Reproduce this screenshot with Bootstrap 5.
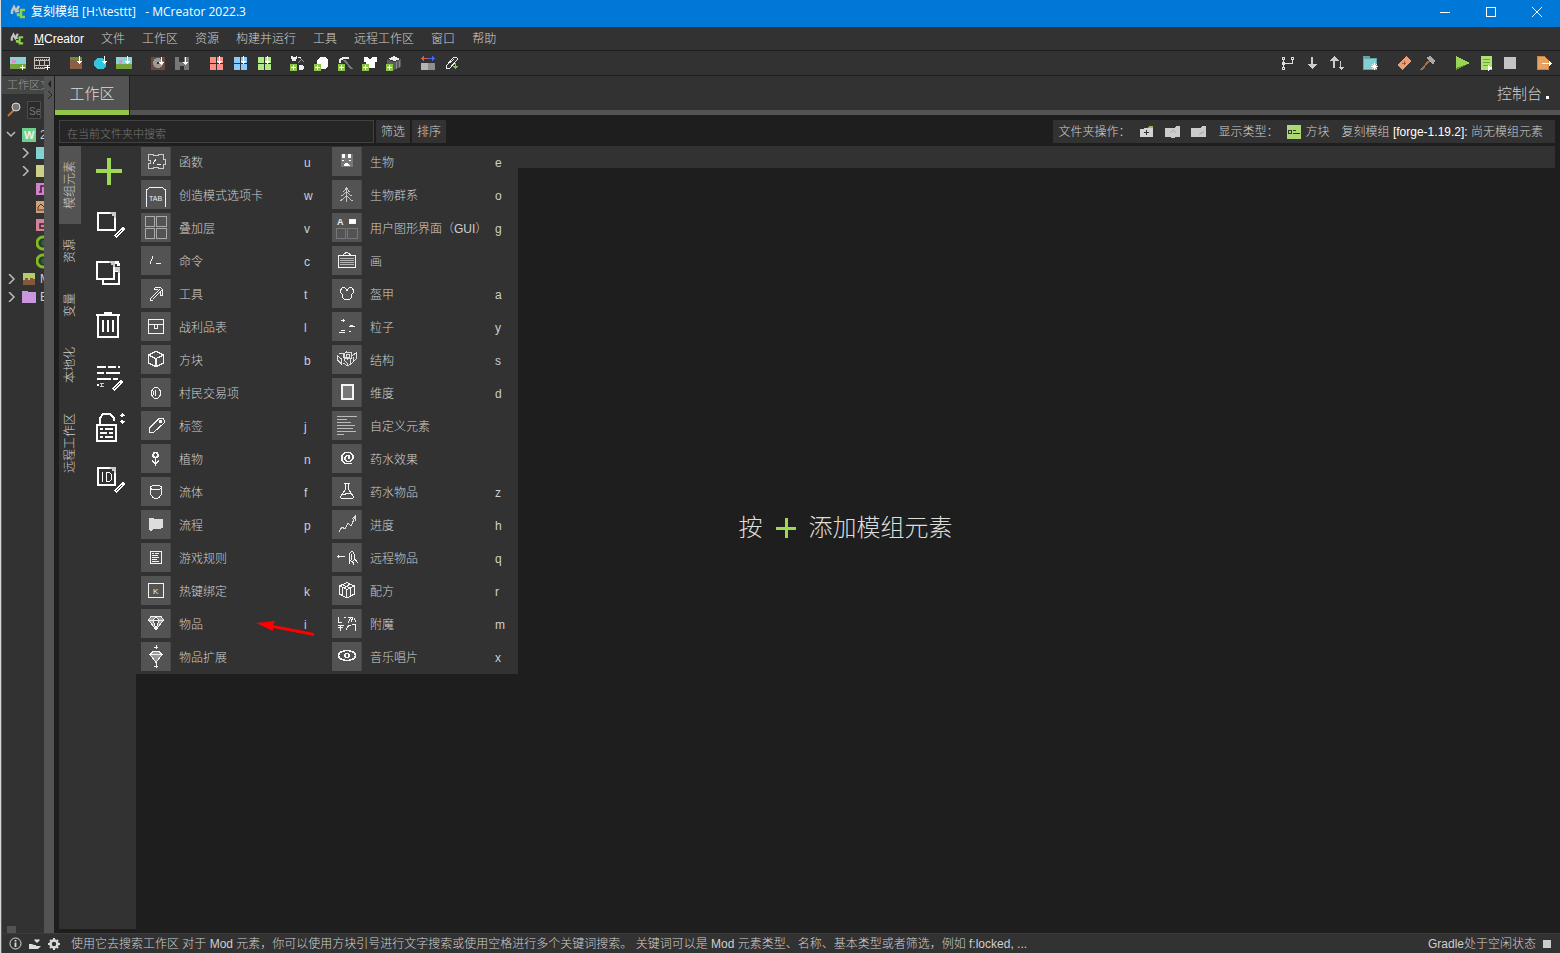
<!DOCTYPE html>
<html lang="zh-CN" data-bs-theme="dark">
<head>
<meta charset="utf-8">
<meta name="viewport" content="width=device-width, initial-scale=1">
<title>复刻模组 [H:\testtt] - MCreator 2022.3</title>
<link href="https://cdn.jsdelivr.net/npm/bootstrap@5.3.0/dist/css/bootstrap.min.css" rel="stylesheet">
<script src="https://cdn.jsdelivr.net/npm/bootstrap@5.3.0/dist/js/bootstrap.bundle.min.js" defer></script>
<style>
:root{--panel:#323232;--mid:#535353;--deep:#1e1e1e;--lime:#93c54b;--ink:#cfcfcf}
body{font:12px/18px "Liberation Sans","Noto Sans CJK SC",sans-serif;font-weight:300;color:var(--ink);background:var(--panel);border-left:1px solid #d5d9dc}
button,input{font:inherit;color:inherit}
button{background:none;border:0;padding:0}
a{color:inherit;text-decoration:none}
svg{display:block;flex:none;fill:none;stroke:none}
.window-frame{min-height:100vh;border-left:1px solid #0078d7}
.title-bar{height:27px;background:#0078d7;color:#fff;font-family:"Open Sans","Noto Sans CJK SC",sans-serif;font-weight:400;padding:0 0 4px 8px}
.title-text{white-space:pre;padding-left:5px}
.title-bar button{width:46px;height:22px}
.menu-row{height:24px;gap:17px;padding-left:8px;border-bottom:1px solid var(--deep)}
.menu-row .brand-link{gap:10px;color:#fff}
.tool-row{height:25px;padding:0 4px;border-bottom:1px solid var(--deep)}
.tool-set{gap:10px}
.tool-set button{width:24px;height:24px;display:grid;place-items:center}
.tree-pane{width:42px;overflow:hidden}
.tree-head{height:18px;background:#464646;color:#999;font-size:11px;padding-left:5px;white-space:nowrap;overflow:hidden}
.tree-find{height:32px;padding-left:5px;gap:6px}
.tree-find input{width:14px;height:18px;border:1px solid #4b4b4b;background:#2b2b2b;font-size:10px;padding:4px 0 0 1px}
.tree-find input::placeholder,.find-box::placeholder{color:#777;opacity:1}
.tree-list li{height:18px;gap:4px;padding-left:4px;white-space:nowrap}
.tree-list .lv2{padding-left:18px}
.tree-list .leaf{padding-left:34px}
.tree-thumb{width:9px;height:7px;margin-left:5px;background:var(--mid)}
.split-bar{width:10px;background:var(--mid);padding-top:3px;gap:1px}
.work-zone{background:var(--deep);min-width:0}
.tab-row{height:39px;padding-left:1px;gap:1px}
.tab-row .tab-on{width:74px;background:var(--mid);border-bottom:5px solid var(--lime);font-size:15px;color:#ddd;padding-top:2px}
.tab-fill{background:var(--panel);border-bottom:5px solid var(--mid);padding:2px 11px 0 0;font-size:15px}
.console-dot{width:3px;height:3px;background:#fff;margin:7px 0 0 4px}
.work-body{padding:5px 5px 4px 5px;gap:3px}
.filter-row{height:23px;gap:2px}
.find-box{width:315px;border:1px solid #414141;background:#262626;font-size:11px;padding:4px 7px 0}
.filter-row>button{width:34px;background:var(--panel)}
.info-strip{background:var(--panel);padding:0 12px 0 6px;white-space:nowrap}
.folder-tools{gap:11px;margin:0 13px 0 8px}
.view-kind{gap:5px;margin:0 12px 0 8px}
.side-tabs{width:22px}
.side-tabs button{writing-mode:vertical-rl;text-orientation:sideways;transform:rotate(180deg);padding:15px 0;line-height:22px}
.side-tabs .on{background:var(--mid)}
.side-pane{background:var(--panel);width:77px}
.side-tools{padding:10px 0 0 11px;gap:19px}
.list-head{height:22px;background:var(--panel)}
.empty-note{font-size:24px;line-height:36px;color:#ddd;gap:13px;padding-bottom:41px}
.element-menu{position:absolute;left:0;top:0;display:grid;grid-template:repeat(16,33px)/repeat(2,191px);grid-auto-flow:column;background:var(--panel)}
.element-menu button{display:grid;grid-template-columns:30px 117px auto;column-gap:8px;align-items:center;padding:0 0 2px 5px;text-align:left}
.element-menu span{padding-top:2px}
.element-menu svg{width:30px;height:29px;background:var(--mid);border:solid #484848;border-width:0 1px 0 0;stroke:#f4f4f4;shape-rendering:crispEdges}
.element-menu text,.solid-text{stroke:none;fill:#eee;font-family:"Liberation Sans",sans-serif}
.red-mark{position:absolute;left:120px;top:474px}
.status-row{height:20px;border-top:1px solid #3c3c3c;padding:0 9px 0 7px;gap:7px;white-space:nowrap}
.crisp{shape-rendering:crispEdges}
</style>
</head>
<body>
<div class="window-frame d-flex flex-column">
<header>
<div class="title-bar d-flex align-items-center">
<svg width="16" height="16" viewBox="0 0 16 16"><path d="M2 10V7l2-4 2 4 3-5M7 4l1 4" stroke="#c4c4c4" stroke-width="2.500"/><path d="M15 6h-4v7h4M8 9v2h3" stroke="#8fd14a" stroke-width="2.500"/></svg>
<span class="title-text flex-grow-1">复刻模组 [H:\testtt]   - MCreator 2022.3</span>
<button aria-label="最小化"><svg class="m-auto crisp" width="12" height="12"><path d="M1 6.500h10" stroke="#fff"/></svg></button>
<button aria-label="最大化"><svg class="m-auto crisp" width="12" height="12"><path d="M1.500 1.500h9v9h-9z" stroke="#fff"/></svg></button>
<button aria-label="关闭"><svg class="m-auto" width="12" height="12"><path d="M1 1l10 10M11 1L1 11" stroke="#fff"/></svg></button>
</div>
<nav class="menu-row d-flex align-items-center">
<a href="#" class="brand-link d-flex align-items-center"><svg width="14" height="14" viewBox="0 0 16 16"><path d="M2 10V7l2-4 2 4 3-5M7 4l1 4" stroke="#c4c4c4" stroke-width="2.500"/><path d="M15 6h-4v7h4M8 9v2h3" stroke="#8fd14a" stroke-width="2.500"/></svg><span><u>M</u>Creator</span></a>
<a href="#">文件</a><a href="#">工作区</a><a href="#">资源</a><a href="#">构建并运行</a><a href="#">工具</a><a href="#">远程工作区</a><a href="#">窗口</a><a href="#">帮助</a>
</nav>
<div class="tool-row d-flex justify-content-between crisp">
<div class="tool-set d-flex">
<div class="d-flex">
<button aria-label="新建纹理"><svg width="16" height="16"><path fill="#8ad2d6" d="M0 2h16v8H0z"/><path fill="#74a33c" d="M0 9h16v5H0z"/><path fill="#e68bd0" d="M2 5h4v3H2z"/><path stroke="#fff" d="M12.500 10v5M10 12.500h5"/></svg></button>
<button aria-label="动画纹理"><svg width="16" height="16"><path stroke="#c9bdb8" d="M0 2.500h16M0 13.500h11M.5 2v12M5.500 5v6M10.500 5v6M15.500 2v8M0 5.500h16M0 10.500h16" /><path stroke="#c9bdb8" stroke-dasharray="1 1" d="M0 4h16M0 12h11"/><path stroke="#fff" d="M13.500 10v5M11 12.500h5"/></svg></button>
</div>
<div class="d-flex">
<button aria-label="导入方块纹理"><svg width="16" height="16"><path fill="#8b5f43" d="M2 2h12v12H2z"/><path fill="#668f37" d="M2 2h12v3H2z"/><path stroke="#fff" d="M11.500 1v8M9 6.500h5M10 7.500h3"/></svg></button>
<button aria-label="导入物品纹理"><svg width="16" height="16"><path fill="#30c6dc" d="M5 3h6l3 4v4l-3 3H5l-3-3V6z"/><path stroke="#fff" d="M12.500 1v8M10 6.500h5M11 7.500h3"/></svg></button>
<button aria-label="导入其他纹理"><svg width="16" height="16"><path fill="#8ad2d6" d="M0 2h16v8H0z"/><path fill="#74a33c" d="M0 9h16v5H0z"/><path fill="#e68bd0" d="M3 5h3v4H3z"/><path stroke="#fff" d="M11.500 1v8M9 6.500h5M10 7.500h3"/></svg></button>
</div>
<div class="d-flex">
<button aria-label="导入声音"><svg width="16" height="16"><path fill="#6d4a3c" d="M1 2h14v13H1z"/><circle cx="8" cy="8" r="5" fill="#999"/><circle cx="8" cy="8" r="1.500" fill="#333"/><path stroke="#fff" d="M11.500 2v8M9 7.500h5M10 8.500h3"/></svg></button>
<button aria-label="导入结构"><svg width="16" height="16"><path fill="#777" d="M1 2h4v5h5V2h5v13h-5v-4H6v4H1z"/><path stroke="#fff" d="M11.500 2v8M9 7.500h5M10 8.500h3"/></svg></button>
</div>
<div class="d-flex">
<button aria-label="导入 Java 模型"><svg width="16" height="16"><path fill="#ff9088" d="M2 2h6v6H2zM9 2h6v6H9zM2 9h6v6H2zM9 9h6v6H9z"/><path stroke="#fff" d="M11.500 1v8M9 6.500h5M10 7.500h3"/></svg></button>
<button aria-label="导入 JSON 模型"><svg width="16" height="16"><path fill="#88ccff" d="M2 2h6v6H2zM9 2h6v6H9zM2 9h6v6H2zM9 9h6v6H9z"/><path stroke="#fff" d="M11.500 1v8M9 6.500h5M10 7.500h3"/></svg></button>
<button aria-label="导入 OBJ 模型"><svg width="16" height="16"><path fill="#b0e986" d="M2 2h6v6H2zM9 2h6v6H9zM2 9h6v6H2zM9 9h6v6H9z"/><path stroke="#fff" d="M11.500 1v8M9 6.500h5M10 7.500h3"/></svg></button>
</div>
<div class="d-flex">
<button aria-label="材料包"><svg width="16" height="16"><path fill="#eee" d="M1 1l3 1 3-1v3H6v2H2V4H1zM9 10h4v1h1v3h-1v1H9zM8 2h3v1H8z"/><path stroke="#999" d="M10 3l4 4M8 8l3-3"/><path fill="#8bc34a" d="M0 9h7v7H0z"/><path stroke="#fff" d="M3.500 10v5M1 12.500h5"/></svg></button>
<button aria-label="矿石包"><svg width="16" height="16"><path fill="#fff" d="M6 2h5l3 3v6l-3 3H6L3 11V6z"/><path fill="#8bc34a" d="M0 9h7v7H0z"/><path stroke="#fff" d="M3.500 10v5M1 12.500h5"/></svg></button>
<button aria-label="工具包"><svg width="16" height="16"><path stroke="#eee" stroke-width="2" d="M2 8V5l3-2h6"/><path stroke="#777" stroke-width="2" d="M6 5l8 9"/><path fill="#8bc34a" d="M0 9h7v7H0z"/><path stroke="#fff" d="M3.500 10v5M1 12.500h5"/></svg></button>
<button aria-label="盔甲包"><svg width="16" height="16"><path fill="#fff" d="M2 2h3l3 2 3-2h4v5h-2v6H4V7H2z"/><path fill="#8bc34a" d="M0 9h7v7H0z"/><path stroke="#fff" d="M3.500 10v5M1 12.500h5"/></svg></button>
<button aria-label="木头包"><svg width="16" height="16"><path fill="#5c5c5c" d="M1 4l7 3 7-3v8l-7 3-7-3z"/><path fill="#eee" d="M2 4l6-3 6 3-6 2z"/><path stroke="#888" d="M10.500 7v7M13.500 6v6"/><path fill="#8bc34a" d="M0 9h7v7H0z"/><path stroke="#fff" d="M3.500 10v5M1 12.500h5"/></svg></button>
</div>
<div class="d-flex">
<button aria-label="调整"><svg width="16" height="16"><path fill="#b4b4b4" d="M1 8h7v7H1z"/><path fill="#8e8e8e" d="M8 8h7v7H8z"/><path stroke="#e05a4e" d="M1 3.500h7M3.500 1v5M2.500 2v3"/><path stroke="#4a66f0" d="M8 3.500h7M12.500 1v5M13.500 2v3"/></svg></button>
<button aria-label="注入标签"><svg width="16" height="16"><path stroke="#eee" d="M2 11l7-8 2-1 2 1v2l-7 8-3 1-1-1zM6 8l4-4"/><path stroke="#8bc34a" d="M11.500 8v6M9 11.500h5M10 12.500h3"/></svg></button>
</div>
</div>
<div class="tool-set d-flex">
<div class="d-flex">
<button aria-label="分支"><svg width="16" height="16"><path stroke="#ddd" d="M3.500 4v8M4 8.500h8.500V4M2.500 2.500h2v2h-2zM11.500 2.500h2v2h-2zM2.500 12.500h2v2h-2zM2.500 7.500h2v2h-2z"/></svg></button>
<button aria-label="拉取"><svg width="16" height="16"><path fill="#ccc" d="M7 2h2v7h4l-5 5-5-5h4z"/></svg></button>
<button aria-label="同步"><svg width="16" height="16"><path fill="#ccc" d="M6 1l5 5H7v7H5V6H1zM12 6h1v6h3l-3 3-3-3h2z"/></svg></button>
</div>
<button aria-label="工作区设置"><svg width="16" height="16"><path fill="#62a4a8" d="M1 1h7v2h7v12H1z"/><path fill="#84d0d0" d="M2 4h12v10H2z"/><path stroke="#fff" d="M9 11.500h7M12.500 8v7M10 9l5 5M15 9l-5 5"/></svg></button>
<div class="d-flex">
<button aria-label="清理"><svg width="16" height="16"><path fill="#e9a078" d="M10 1l5 5-9 9-5-5z"/><path stroke="#9d5b3c" d="M6 8.500h4M8.500 6v4"/></svg></button>
<button aria-label="构建"><svg width="16" height="16"><path stroke="#a86d47" stroke-width="2" d="M1 15l8-9"/><path fill="#aaa" d="M6 3l4-2 5 5-2 4-3-4z"/></svg></button>
</div>
<div class="d-flex">
<button aria-label="运行客户端"><svg width="16" height="16"><path fill="#9bd35a" d="M2 1l14 7-14 7z"/><path fill="#679932" d="M2 13l14-5-14 7z"/></svg></button>
<button aria-label="运行服务端"><svg width="16" height="16"><path fill="#afe070" d="M3 1h11v14H3z"/><path stroke="#72a440" d="M5 4.500h7M5 7.500h7M5 10.500h5"/><path fill="#fff" d="M10 10l5 3-5 3z"/></svg></button>
<button aria-label="停止"><svg width="16" height="16"><path fill="#c4c4c4" d="M2 2h12v12H2z"/></svg></button>
</div>
<button aria-label="导出"><svg width="16" height="16"><path fill="#e4a362" stroke="#d08435" d="M1.500 1.500h7l4 4v9h-11z"/><path stroke="#fff" d="M6 8.500h10M13.500 6v5M14.500 7v3"/></svg></button>
</div>
</div>
</header>

<main class="d-flex flex-grow-1">
<aside class="tree-pane d-flex flex-column flex-shrink-0">
<div class="tree-head">工作区文件</div>
<div class="tree-find d-flex align-items-center">
<svg width="14" height="16"><path d="M1 14l6-6" stroke="#b87646" stroke-width="2"/><circle cx="9" cy="5" r="4" fill="#777" stroke="#ddd"/></svg>
<input type="text" placeholder="Se" aria-label="搜索文件">
</div>
<ul class="tree-list list-unstyled mb-auto">
<li class="d-flex align-items-center"><svg width="12" height="10"><path d="M1 2l4 4 4-4" stroke="#bbb" stroke-width="1.500"/></svg><svg width="14" height="14"><path fill="#6bd08a" d="M0 0h14v14H0z"/><text x="2" y="11" font-size="11" font-weight="700" class="solid-text">W</text></svg><span>2</span></li>
<li class="lv2 d-flex align-items-center"><svg width="12" height="10"><path d="M3 0l5 5-5 5" stroke="#bbb" stroke-width="1.500"/></svg><svg width="14" height="12"><path fill="#83d2d2" d="M0 0h14v12H0z"/></svg></li>
<li class="lv2 d-flex align-items-center"><svg width="12" height="10"><path d="M3 0l5 5-5 5" stroke="#bbb" stroke-width="1.500"/></svg><svg width="14" height="12"><path fill="#cdd087" d="M0 0h14v12H0z"/></svg></li>
<li class="leaf d-flex align-items-center"><svg width="14" height="12"><path fill="#d182cb" d="M0 0h14v12H0z"/><path d="M3 9h2V3h4" stroke="#3a2338" stroke-width="1.500"/></svg></li>
<li class="leaf d-flex align-items-center"><svg width="14" height="12"><path fill="#d2a07b" d="M0 0h14v12H0z"/><path d="M2 10V6l3-3 3 3M3 9h5" stroke="#4a3020"/></svg></li>
<li class="leaf d-flex align-items-center"><svg width="14" height="12"><path fill="#cf8298" d="M0 0h14v12H0z"/><path d="M4 9V5h5v4z" stroke="#4a2030" stroke-width="1.500"/></svg></li>
<li class="leaf d-flex align-items-center"><svg width="16" height="16"><circle cx="7" cy="8" r="6" stroke="#80b922" stroke-width="3"/><circle cx="8" cy="8" r="3" fill="#176b35"/></svg></li>
<li class="leaf d-flex align-items-center"><svg width="16" height="16"><circle cx="7" cy="8" r="6" stroke="#80b922" stroke-width="3"/><circle cx="8" cy="8" r="3" fill="#176b35"/></svg></li>
<li class="d-flex align-items-center"><svg width="12" height="10"><path d="M3 0l5 5-5 5" stroke="#bbb" stroke-width="1.500"/></svg><svg width="14" height="12"><path fill="#85583d" d="M1 0h12v12H1z"/><path fill="#b5cc67" d="M1 0h12v6h-2V5H8v2H6V5H3v2H1z"/></svg><span>M</span></li>
<li class="d-flex align-items-center"><svg width="12" height="10"><path d="M3 0l5 5-5 5" stroke="#bbb" stroke-width="1.500"/></svg><svg width="14" height="12"><path fill="#ca96dc" d="M0 0h6v1h8v11H0z"/></svg><span>E</span></li>
</ul>
<div class="tree-thumb"></div>
</aside>
<div class="split-bar d-flex flex-column align-items-center flex-shrink-0">
<svg width="8" height="10"><path d="M6 1L3 5l3 4z" fill="#222"/></svg>
<svg width="8" height="10"><path d="M3 1l4 4-4 4" stroke="#222"/></svg>
</div>

<section class="work-zone d-flex flex-column flex-grow-1">
<div class="tab-row d-flex">
<button class="tab-on">工作区</button>
<div class="tab-fill flex-grow-1 d-flex align-items-center justify-content-end"><button>控制台</button><span class="console-dot"></span></div>
</div>
<div class="work-body d-flex flex-column flex-grow-1">
<div class="filter-row d-flex">
<input class="find-box" type="text" placeholder="在当前文件夹中搜索" aria-label="搜索">
<button>筛选</button><button>排序</button>
<div class="info-strip ms-auto d-flex align-items-center">
<span>文件夹操作：</span>
<div class="folder-tools d-flex">
<button aria-label="新建文件夹"><svg class="crisp" width="15" height="14"><path fill="#d4d4d4" d="M1 4h4V3h9v9H1z"/><path fill="#8bc34a" d="M10 1h4v2H9z"/><path stroke="#333" d="M7.500 5v5M5 7.500h5"/></svg></button>
<button aria-label="上级文件夹"><svg class="crisp" width="15" height="14"><path fill="#ccc" d="M0 3h9l2-2h4v11h-5v1H6v-1H0z"/><path stroke="#aaa" d="M5 8l3-3 3 3"/></svg></button>
<button aria-label="重命名文件夹"><svg class="crisp" width="15" height="14"><path fill="#ccc" d="M0 3h9l2-2h4v11H0z"/><path stroke="#aaa" d="M8 10l5-4"/></svg></button>
</div>
<span>显示类型：</span>
<button class="view-kind d-flex align-items-center"><svg class="crisp" width="14" height="14"><path fill="#acd873" d="M0 0h14v14H0z"/><path stroke="#333" d="M1.500 5.500h3v3h-3zM6 5.500h3M6 8.500h7"/></svg>方块</button>
<span>复刻模组 <span class="text-white">[forge-1.19.2]:</span> 尚无模组元素</span>
</div>
</div>

<div class="d-flex flex-grow-1">
<div class="side-pane d-flex flex-shrink-0">
<div class="side-tabs d-flex flex-column">
<button class="on">模组元素</button><button>资源</button><button>变量</button><button>本地化</button><button>远程工作区</button>
</div>
<div class="side-tools d-flex flex-column crisp">
<button aria-label="添加"><svg width="32" height="32"><path d="M17 2v27M4 15h26" stroke="#9fd855" stroke-width="4"/></svg></button>
<button aria-label="编辑"><svg width="34" height="32"><path d="M6 6h17v17H6z" stroke="#fff" stroke-width="2"/><path fill="#ccc" d="M18 5h6v6h-2V9h-2V7h-2z"/><path d="M23 30l9-9" stroke="#fff" stroke-width="4"/><path d="M24 29l6-6" stroke="#333"/></svg></button>
<button aria-label="复制"><svg width="32" height="32"><path d="M5 4h17v17H5z" stroke="#fff" stroke-width="2"/><path d="M11 22v4h16V13h-4" stroke="#fff" stroke-width="2"/><path fill="#ccc" d="M17 3h6v6h-2V7h-2V5h-2zM23 9h5v6h-2v-2h-3z"/><path fill="#fff" d="M23 3h4v2h1v3h-3V6h-2z"/></svg></button>
<button aria-label="删除"><svg width="32" height="32"><path d="M4 6h24M12 4h8M6 7v21h20V7M11 11v12M16 11v12M21 11v12" stroke="#fff" stroke-width="2"/></svg></button>
<button aria-label="编辑代码"><svg width="32" height="32"><path d="M5 7h9M16 7h8M26 7h2M5 13h7M14 13h14M5 19h14M21 19h5M5 25h2" stroke="#fff" stroke-width="2"/><path d="M8 23.500h4M8 26.500h4M9.500 24v3" stroke="#ccc"/><path d="M21 30l9-9" stroke="#fff" stroke-width="4"/><path d="M22 29l6-6" stroke="#333"/></svg></button>
<button aria-label="锁定"><svg width="34" height="32"><path d="M5 14h19v16H5zM8 13V7l3-4h7l4 4v3M8 18h3M13 18h8M8 22h7M17 22h4M8 26h3M13 26h8" stroke="#fff" stroke-width="2"/><path d="M27 5l3-3 3 3zM27 10h6l-3 3zM29 5h2v1h-2zM29 9h2v1h-2z" fill="#fff"/></svg></button>
<button aria-label="编辑 ID"><svg width="34" height="32"><path d="M6 6h17v17H6z" stroke="#fff" stroke-width="2"/><path d="M10.500 10v10M13.500 10.500h4l2 2v5l-2 2h-4M14.500 10v10" stroke="#fff"/><path fill="#ccc" d="M18 5h6v6h-2V9h-2V7h-2z"/><path d="M23 30l9-9" stroke="#fff" stroke-width="4"/><path d="M24 29l6-6" stroke="#333"/></svg></button>
</div>
</div>

<div class="position-relative d-flex flex-column flex-grow-1">
<div class="list-head"></div>
<div class="empty-note flex-grow-1 d-flex align-items-center justify-content-center"><span>按</span><svg class="crisp" width="20" height="20"><path d="M10 0v20M0 10h20" stroke="#9fd855" stroke-width="3"/></svg><span>添加模组元素</span></div>
<div class="element-menu">
<button><svg viewBox="0 0 29 29"><path d="M7.500 7.500h5v1h5v-1h5v5h2v5h-2v4h-5v-1h-5v1h-5v-5h2v-3h-2z" stroke="#ccc"/><path d="M12 17l3-5M16 17.500h4"/></svg><span>函数</span><span>u</span></button>
<button><svg viewBox="0 0 29 29"><path d="M5.500 27V10l3-2.500h13l3 2.500v17"/><text x="8" y="21" font-size="7">TAB</text></svg><span>创造模式选项卡</span><span>w</span></button>
<button><svg viewBox="0 0 29 29"><path d="M4.500 3.500h9v10h-9zM15.500 3.500h10v10h-10zM4.500 15.500h9v10h-9zM15.500 15.500h10v10h-10z" stroke="#aaa"/></svg><span>叠加层</span><span>v</span></button>
<button><svg viewBox="0 0 29 29"><path d="M9 18l3-8M15 17.500h5"/></svg><span>命令</span><span>c</span></button>
<button><svg viewBox="0 0 29 29"><path d="M9.500 19.500l9-9M11.500 20.500l9-9M9.500 19v2h2M13.500 8.500h6l2 2v6M13.500 9v1.500h3M19.500 13v3.500h2"/></svg><span>工具</span><span>t</span></button>
<button><svg viewBox="0 0 29 29"><path d="M7.500 7.500h15v14h-15zM8 12.500h15M13.500 13v3h3v-3"/></svg><span>战利品表</span><span>l</span></button>
<button><svg viewBox="0 0 29 29" shape-rendering="auto"><path d="M15 6.500l7.500 3.500v8L15 22l-7.500-4v-8zM7.500 10l7.500 3.500 7.500-3.500M15 13.500V22" stroke-width="1.300"/></svg><span>方块</span><span>b</span></button>
<button><svg viewBox="0 0 29 29"><ellipse cx="15" cy="15" rx="4.500" ry="5.500"/><path d="M14.500 12v6M12.500 13v4"/></svg><span>村民交易项</span></button>
<button><svg viewBox="0 0 29 29"><path d="M8 17.500L18.500 7h3l1.500 2v3L12.500 21.500H9l-1-1.500z"/><path d="M18 9h2v2h-2z" fill="#fff"/></svg><span>标签</span><span>j</span></button>
<button><svg viewBox="0 0 29 29"><circle cx="14.500" cy="11" r="2.500" stroke-width="1.500"/><path d="M14.500 14v8M11 16.500l3.500 3 4-3" stroke-width="1.300"/></svg><span>植物</span><span>n</span></button>
<button><svg viewBox="0 0 29 29"><ellipse cx="15" cy="10.500" rx="5.500" ry="2"/><path d="M9.500 11v6l2 3 2 1.500h3l2-1.500 2-3V11M10 12.500h6"/></svg><span>流体</span><span>f</span></button>
<button><svg viewBox="0 0 29 29"><path d="M8 8h4l1 1h9v9h-2v1h-8l-2 2-2-1z" fill="#ddd" stroke="none"/></svg><span>流程</span><span>p</span></button>
<button><svg viewBox="0 0 29 29"><path d="M9.500 8.500h11v12h-11zM11 10.500h2M14 10.500h4M11 12.500h6M11 14.500h7M11 16.500h5M11 18.500h7"/></svg><span>游戏规则</span></button>
<button><svg viewBox="0 0 29 29"><path d="M7.500 7.500h15v14h-15z"/><text x="12" y="18" font-size="8">K</text></svg><span>热键绑定</span><span>k</span></button>
<button><svg viewBox="0 0 29 29"><path fill="#999" d="M10 7.500h10l2.500 3.500L15 21 7.500 11zM8 11.500h14M12 11l3 9 3-9-3-3z"/></svg><span>物品</span><span>i</span></button>
<button><svg viewBox="0 0 29 29"><path fill="#999" d="M12 9.500h6l3 3-6 8-6-8zM9 12.500h12M15 3v4M13 5.500h4M15 21v5M13 24.500h4"/></svg><span>物品扩展</span></button>
<button><svg viewBox="0 0 29 29"><g stroke="none"><path fill="#777" d="M9 7h12v13H9z"/><path fill="#fff" d="M10 7h3v4h-3zM16 7h3v4h-3zM13 16h3l2 3h-6zM10 13h2v1h-2zM17 13h2v1h-2z"/></g></svg><span>生物</span><span>e</span></button>
<button><svg viewBox="0 0 29 29"><path d="M14.500 7v15M14.500 8l-3 4M14.500 8l3 4M14.500 12l-5 4M14.500 12l5 4M14.500 16l-6 5M14.500 16l6 5" stroke="#c4c4c4"/></svg><span>生物群系</span><span>o</span></button>
<button><svg viewBox="0 0 29 29"><path d="M4.500 15.500h9v10h-9zM15.500 15.500h10v10h-10z" stroke="#777"/><path d="M17.500 6.500h6v4h-6z" fill="#fff"/><text x="5" y="12" font-size="9" font-weight="700">A</text></svg><span>用户图形界面（GUI）</span><span>g</span></button>
<button><svg viewBox="0 0 29 29"><path d="M6.500 9.500h17v12h-17zM11 9l4-3 4 3"/><path d="M8 12.500h14M8 14.500h14M8 16.500h14M8 18.500h14" stroke="#b5b5b5"/></svg><span>画</span></button>
<button><svg viewBox="0 0 29 29"><path d="M8.500 11l2-2.500h2l2.500 3 2.500-3h2l2 2.500v2.500l-2 2v3l-2 2h-5l-2-2v-3l-2-2z"/></svg><span>盔甲</span><span>a</span></button>
<button><svg viewBox="0 0 29 29"><path d="M9 8.500h4M11 7v3M17 14.500h6M18 13.500h3M7 20.500h6M9 18.500h4M17 19.500h2"/></svg><span>粒子</span><span>y</span></button>
<button><svg viewBox="0 0 29 29"><path stroke="#ddd" d="M5.500 11l4 3v5l-4-4zM9.500 8l3 2v6M11.500 9l3-2 5 1v5l-4 1-4-2zM14 9.500h3v3h-3zM20 11l4-3v6l-4 4-4 3-5-3M12 15l3 3v3M18 14v6M21 12v4M7 8h3M22 8h2"/></svg><span>结构</span><span>s</span></button>
<button><svg viewBox="0 0 29 29"><path d="M10 7h11v14H10z" stroke-width="2" fill="#777"/></svg><span>维度</span><span>d</span></button>
<button><svg viewBox="0 0 29 29"><path d="M5 5.500h20M5 8.500h10M5 11.500h14M5 14.500h18M5 17.500h16M5 20.500h19M5 23.500h7" stroke="#bbb"/></svg><span>自定义元素</span></button>
<button><svg viewBox="0 0 29 29"><path d="M20 19.500h-7l-3-3v-5l3-3h5l3 3v3l-3 3h-3l-2-2v-2l2-2h2v3" stroke-width="1.400"/></svg><span>药水效果</span></button>
<button><svg viewBox="0 0 29 29"><path d="M12 6.500h6M13.500 7v5l-5 8 1 1.500h11l1-1.500-5-8V7M11 17.500l5-1h3"/></svg><span>药水物品</span><span>z</span></button>
<button><svg viewBox="0 0 29 29"><path d="M7 22l3-5 3 2 3-6 3 3 4-9M20 9l3-3v5" stroke="#ddd"/></svg><span>进度</span><span>h</span></button>
<button><svg viewBox="0 0 29 29"><path d="M5 13.500h8M6.500 12v3M17.500 17v-6l2-3h1l2 4v4l-2 3zM19.500 11v6M22 15l4 5M18 18l-1 3M21 19l1 3"/></svg><span>远程物品</span><span>q</span></button>
<button><svg viewBox="0 0 29 29"><path d="M15 6.500l7.500 3.500v8L15 22l-7.500-4v-8zM7.500 10l7.500 3.500 7.500-3.500M14.500 13.500V22M10.500 12v7M18.500 12v8M11 9l7 3M18 8l-6 4"/></svg><span>配方</span><span>r</span></button>
<button><svg viewBox="0 0 29 29"><path d="M6.500 8v5h3M12 8.500h2M16 8.500h3l-3 5M21 8l-2 5M22 9l2 4M6 16.500h6M6 18.500h5M8.500 16v6M14 21l3-5h2M20 15.500h3.500v6"/></svg><span>附魔</span><span>m</span></button>
<button><svg viewBox="0 0 29 29"><ellipse cx="15" cy="13.500" rx="8.500" ry="5" stroke-width="1.500"/><circle cx="15" cy="13.500" r="2" stroke-width="1.500"/></svg><span>音乐唱片</span><span>x</span></button>
</div>
<svg class="red-mark" width="60" height="18"><path d="M0 3l19-2-2 4 41 8v3L17 8v3z" fill="#f00"/></svg>
</div>
</div>
</div>
</section>
</main>

<footer class="status-row d-flex align-items-center">
<svg width="13" height="13"><circle cx="6.500" cy="6.500" r="5.500" stroke="#ddd"/><path d="M6.500 3v1.500M6.500 5.500v4.500" stroke="#ddd" stroke-width="1.800"/></svg>
<svg width="12" height="12"><path fill="#ddd" d="M5 2l2-1 1 1 1-1 2 1-3 3zM0 6h3l2 1h2v1h5l-3 3H0z"/></svg>
<svg width="12" height="12"><circle cx="6" cy="6" r="3.500" stroke="#ddd" stroke-width="2.500"/><path d="M6 0v2M6 10v2M0 6h2M10 6h2M2 2l1 1M10 10L9 9M10 2L9 3M2 10l1-1" stroke="#ddd" stroke-width="2"/></svg>
<span class="ps-1">使用它去搜索工作区 对于 Mod 元素，你可以使用方块引号进行文字搜索或使用空格进行多个关键词搜索。 关键词可以是 Mod 元素类型、名称、基本类型或者筛选，例如 f:locked, ...</span>
<span class="ms-auto">Gradle处于空闲状态</span>
<svg width="8" height="8"><path fill="#ccc" d="M0 0h8v8H0z"/></svg>
</footer>
</div>
</body>
</html>
